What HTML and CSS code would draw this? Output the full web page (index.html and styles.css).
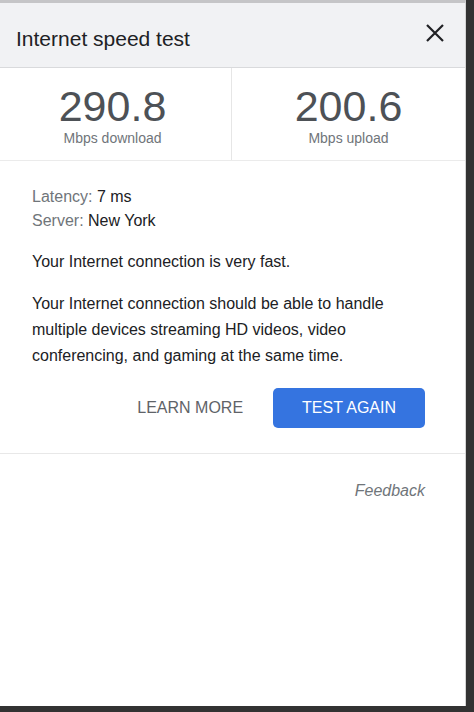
FILE: index.html
```html
<!DOCTYPE html>
<html lang="en">
<head>
<meta charset="utf-8">
<title>Internet speed test</title>
<link rel="stylesheet" href="styles.css">
</head>
<body>
<div class="frame">
  <div class="panel">
    <header class="header">
      <h1 class="title">Internet speed test</h1>
      <button class="close" aria-label="Close">
        <svg width="24" height="24" viewBox="0 0 24 24"><path d="M4 4 L20 20 M20 4 L4 20" stroke="#202124" stroke-width="2.2" fill="none"/></svg>
      </button>
    </header>
    <section class="stats">
      <div class="stat">
        <div class="num">290.8</div>
        <div class="unit">Mbps download</div>
      </div>
      <div class="stat">
        <div class="num">200.6</div>
        <div class="unit">Mbps upload</div>
      </div>
    </section>
    <section class="body">
      <div class="info">
        <div><span class="key">Latency:</span> 7 ms</div>
        <div><span class="key">Server:</span> New York</div>
      </div>
      <p class="para">Your Internet connection is very fast.</p>
      <p class="para">Your Internet connection should be able to handle multiple devices streaming HD videos, video conferencing, and gaming at the same time.</p>
      <div class="actions">
        <button class="btn btn-text">LEARN MORE</button>
        <button class="btn btn-primary">TEST AGAIN</button>
      </div>
    </section>
    <footer class="footer">
      <a class="feedback">Feedback</a>
    </footer>
  </div>
</div>
</body>
</html>
```
FILE: styles.css
```css
html, body {
  margin: 0;
  padding: 0;
  background: #323232;
}
.frame {
  width: 474px;
  height: 712px;
  background: #323232;
}
.panel {
  width: 466px;
  height: 706px;
  box-sizing: border-box;
  background: #ffffff;
  border-top: 3px solid #c5c5c7;
  border-right: 1px solid #d4d4d4;
  font-family: "Liberation Sans", Arial, sans-serif;
  color: #202124;
  display: flex;
  flex-direction: column;
}
.header {
  height: 65px;
  box-sizing: border-box;
  background: #f1f2f4;
  border-bottom: 1px solid #d9dadc;
  display: flex;
  justify-content: space-between;
  align-items: flex-start;
}
.title {
  margin: 0;
  padding: 8px 0 0 16px;
  font-size: 21px;
  font-weight: normal;
  line-height: 56px;
  color: #202124;
}
.close {
  margin: 18px 18px 0 0;
  width: 24px;
  height: 24px;
  padding: 0;
  border: 0;
  background: transparent;
  display: flex;
}
.stats {
  display: grid;
  grid-template-columns: 232px 1fr;
  border-bottom: 1px solid #ebebeb;
}
.stat {
  text-align: center;
  padding: 17px 0 12px;
}
.stat:first-child {
  border-right: 1px solid #e6e6e6;
  padding-right: 6px;
}
.num {
  font-size: 43px;
  line-height: 43px;
  color: #4d5156;
}
.unit {
  font-size: 14px;
  line-height: 20px;
  color: #70757a;
}
.body {
  padding: 24px 40px 25px 32px;
  border-bottom: 1px solid #e8e8e8;
  font-size: 16px;
}
.info {
  line-height: 24px;
}
.key {
  color: #70757a;
}
.para {
  margin: 16px 0 0;
  line-height: 26px;
}
.actions {
  display: flex;
  justify-content: flex-end;
  align-items: center;
  gap: 1px;
  margin-top: 19px;
}
.btn {
  font-family: "Liberation Sans", Arial, sans-serif;
  font-size: 16px;
  height: 40px;
  padding: 0 29px;
  border: 0;
  border-radius: 5px;
  background: transparent;
}
.btn-text {
  color: #5f6368;
}
.btn-primary {
  background: #3574e0;
  color: #ffffff;
}
.footer {
  display: flex;
  justify-content: flex-end;
  padding: 25px 40px 0 32px;
}
.feedback {
  font-size: 16px;
  line-height: 24px;
  font-style: italic;
  color: #70757a;
}
```
